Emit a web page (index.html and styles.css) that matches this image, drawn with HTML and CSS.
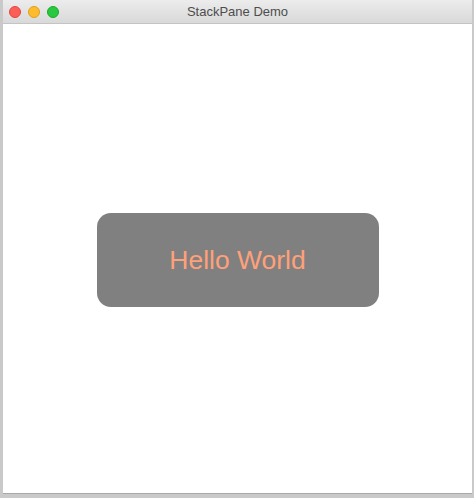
FILE: index.html
```html
<!DOCTYPE html>
<html lang="en">
<head>
    <meta charset="UTF-8">
    <meta name="viewport" content="width=device-width, initial-scale=1.0">
    <title>StackPane Demo</title>
    <link rel="stylesheet" href="styles.css">
</head>
<body>

<div class="window">
    <div class="titlebar">
        <div class="lights">
            <span class="light red"></span>
            <span class="light yellow"></span>
            <span class="light green"></span>
        </div>
        <div class="title">StackPane Demo</div>
    </div>
    <div class="stack">
        <div class="pane">
            <span class="label">Hello World</span>
        </div>
    </div>
</div>

</body>
</html>
```

FILE: styles.css
```css
body {
    margin: 0;
    background-color: #c9c9c9;
    font-family: "Liberation Sans", Arial, sans-serif;
}
.window {
    margin: 0 2px 0 3px;
    height: 494px;
    background-color: #ffffff;
    display: flex;
    flex-direction: column;
    border-bottom: 1px solid #a8a8a8;
    box-sizing: border-box;
}
.titlebar {
    height: 24px;
    position: relative;
    display: flex;
    align-items: center;
    justify-content: center;
    background: linear-gradient(#ececec, #d9d9d9);
    border-bottom: 1px solid #c4c4c4;
    box-sizing: border-box;
}
.lights {
    position: absolute;
    left: 6px;
    top: 6px;
    display: flex;
    gap: 7px;
}
.light {
    width: 12px;
    height: 12px;
    border-radius: 50%;
    box-sizing: border-box;
}
.red {
    background-color: #fc5f57;
    border: 1px solid #e2463f;
}
.yellow {
    background-color: #fdbc2e;
    border: 1px solid #e1a116;
}
.green {
    background-color: #28c840;
    border: 1px solid #1aab29;
}
.title {
    font-size: 13px;
    color: #4d4d4d;
}
.stack {
    flex: 1;
    display: flex;
    align-items: center;
    justify-content: center;
    padding-top: 3px;
}
.pane {
    width: 282px;
    height: 94px;
    border-radius: 14px;
    background-color: #808080;
    display: flex;
    align-items: center;
    justify-content: center;
}
.label {
    font-size: 26.5px;
    color: #ffa07a;
}
```
